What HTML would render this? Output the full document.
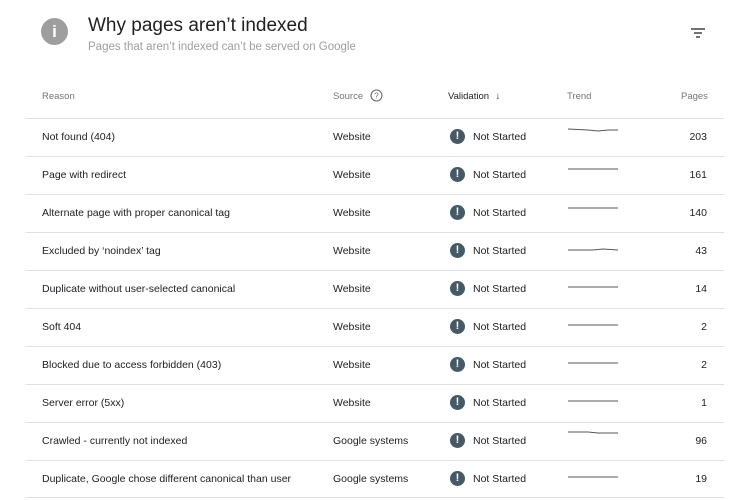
<!DOCTYPE html><html><head><style>
body{margin:0;width:750px;height:500px;background:#fff;font-family:"Liberation Sans",sans-serif;overflow:hidden;position:relative;color:#202124}
.a{position:absolute}
.row{position:absolute;left:26px;width:698px;height:38px;border-top:1px solid #e0e0e0;font-size:10.5px}
.row span{position:absolute;top:12px}
.ic{position:absolute;left:424px;top:10px;width:15px;height:15px;border-radius:50%;background:#455a64;color:#fff;font-weight:bold;font-size:11px;text-align:center;line-height:15px}
.hd{font-size:9.5px;color:#757575;position:absolute;top:91px}
</style></head><body>
<div class="a" style="left:41px;top:18px;width:27px;height:27px;border-radius:50%;background:#9e9e9e;color:#fff;font-weight:bold;font-size:17px;text-align:center;line-height:27px">i</div>
<div class="a" style="left:88px;top:15px;font-size:19px;color:#202124">Why pages aren’t indexed</div>
<div class="a" style="left:88px;top:41px;font-size:11.5px;color:#9e9e9e">Pages that aren’t indexed can’t be served on Google</div>
<svg class="a" style="left:690px;top:27px" width="16" height="12"><path d="M1 2h14M4 6h8M6 10h4" stroke="#444" stroke-width="1.5"/></svg>
<div class="hd" style="left:42px">Reason</div>
<div class="hd" style="left:333px">Source</div>
<svg class="a" style="left:370px;top:89px" width="13" height="13"><circle cx="6.5" cy="6.5" r="5.5" fill="none" stroke="#666" stroke-width="1.1"/><text x="6.5" y="9.5" font-size="8" text-anchor="middle" fill="#666" font-family="Liberation Sans">?</text></svg>
<div class="hd" style="left:448px;color:#202124">Validation <span style="margin-left:4px">↓</span></div>
<div class="hd" style="left:567px">Trend</div>
<div class="hd" style="left:681px">Pages</div>
<div id="t"></div>
<div class="a" style="left:26px;top:497px;width:698px;border-top:1px solid #e0e0e0"></div>
<script>
var d=[["Not found (404)","Website",203,"M0 2 L20 3 L30 4 L40 3 L50 3"],["Page with redirect","Website",161,"M0 4 L50 4"],["Alternate page with proper canonical tag","Website",140,"M0 5 L50 5"],["Excluded by ‘noindex’ tag","Website",43,"M0 9 L25 9 L35 8 L50 9"],["Duplicate without user-selected canonical","Website",14,"M0 8 L50 8"],["Soft 404","Website",2,"M0 8 L50 8"],["Blocked due to access forbidden (403)","Website",2,"M0 8 L50 8"],["Server error (5xx)","Website",1,"M0 8 L50 8"],["Crawled - currently not indexed","Google systems",96,"M0 1 L20 1 L30 2 L50 2"],["Duplicate, Google chose different canonical than user","Google systems",19,"M0 8 L50 8"]];
var h="";d.forEach(function(r,i){h+='<div class="row" style="top:'+(118+i*38)+'px"><span style="left:16px">'+r[0]+'</span><span style="left:307px">'+r[1]+'</span><div class="ic">!</div><span style="left:447px">Not Started</span><svg style="position:absolute;left:542px;top:8px" width="52" height="12"><path d="'+r[3]+'" fill="none" stroke="#555" stroke-width="1"/></svg><span style="right:17px">'+r[2]+'</span></div>'});
document.getElementById("t").innerHTML=h;
</script>
</body></html>
